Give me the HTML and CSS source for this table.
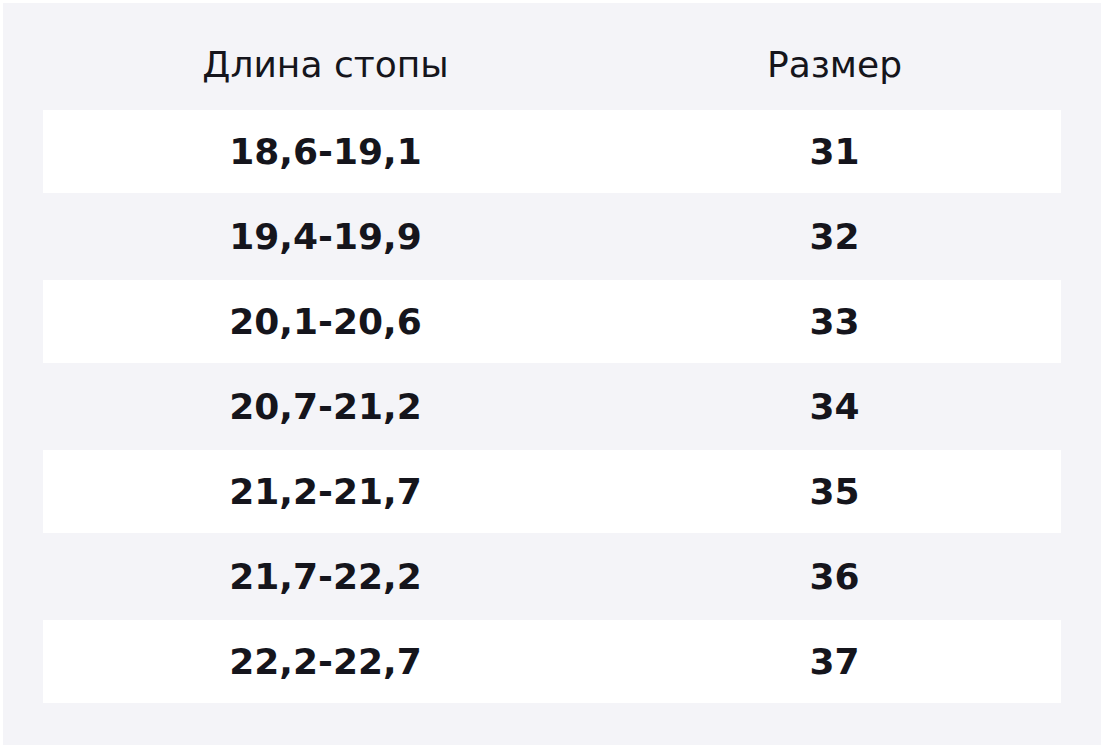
FILE: index.html
```html
<!DOCTYPE html>
<html lang="ru">
<head>
<meta charset="utf-8">
<link rel="stylesheet" href="styles.css">
</head>
<body>
<div class="panel">
  <div class="row head">
    <div class="cell">Длина стопы</div>
    <div class="cell">Размер</div>
  </div>
  <div class="row odd"><div class="cell">18,6-19,1</div><div class="cell">31</div></div>
  <div class="row even"><div class="cell">19,4-19,9</div><div class="cell">32</div></div>
  <div class="row odd"><div class="cell">20,1-20,6</div><div class="cell">33</div></div>
  <div class="row even"><div class="cell">20,7-21,2</div><div class="cell">34</div></div>
  <div class="row odd"><div class="cell">21,2-21,7</div><div class="cell">35</div></div>
  <div class="row even"><div class="cell">21,7-22,2</div><div class="cell">36</div></div>
  <div class="row odd"><div class="cell">22,2-22,7</div><div class="cell">37</div></div>
</div>
</body>
</html>
```
FILE: styles.css
```css
html, body {
  margin: 0;
  padding: 0;
  background: #ffffff;
}
body {
  padding: 3px;
  font-family: "DejaVu Sans", sans-serif;
  color: #15151c;
}
.panel {
  width: 1098px;
  height: 742px;
  box-sizing: border-box;
  background: #f4f4f8;
  padding: 40px 40px 40px 40px;
}
.row {
  display: grid;
  grid-template-columns: 509px 509px;
}
.cell {
  padding-left: 56px;
  text-align: center;
}
.head {
  font-size: 36px;
  line-height: 44px;
  padding-bottom: 23px;
}
.odd, .even {
  height: 83px;
  border-bottom: 2px solid #f4f4f8;
  align-items: center;
  font-size: 36px;
  font-weight: bold;
}
.odd {
  background: #ffffff;
}
.even {
  background: #f4f4f8;
}
```
